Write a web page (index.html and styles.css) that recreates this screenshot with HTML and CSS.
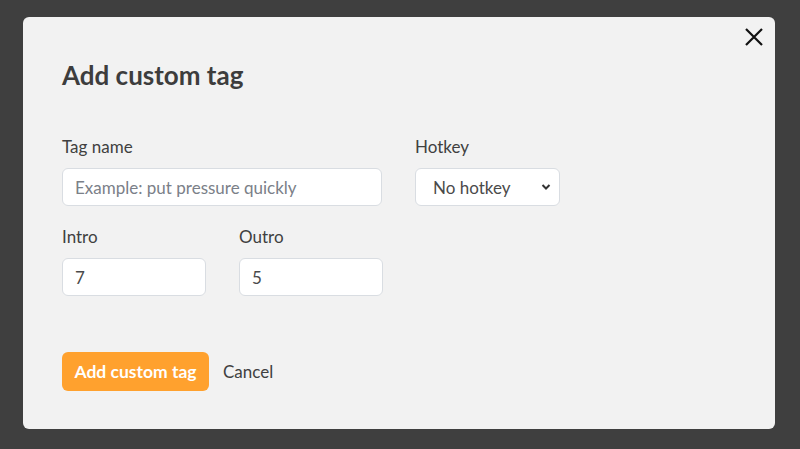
FILE: index.html
```html
<!DOCTYPE html>
<html>
<head>
<meta charset="utf-8">
<link rel="stylesheet" href="styles.css">
</head>
<body>
<div class="overlay">
  <div class="modal">
    <button class="close" aria-label="Close">
      <svg width="20" height="20" viewBox="0 0 20 20"><path d="M2 2 L18 18 M18 2 L2 18" stroke="#111" stroke-width="2.2" fill="none"/></svg>
    </button>
    <h2 class="title">Add custom tag</h2>
    <div class="row row-top">
      <div class="field field-name">
        <label class="label">Tag name</label>
        <input class="input" type="text" placeholder="Example: put pressure quickly">
      </div>
      <div class="field field-hotkey">
        <label class="label">Hotkey</label>
        <div class="select">
          <span>No hotkey</span>
          <svg width="10" height="8" viewBox="0 0 10 8"><path d="M1.5 2 L5 5.5 L8.5 2" stroke="#333" stroke-width="2" fill="none"/></svg>
        </div>
      </div>
    </div>
    <div class="row row-times">
      <div class="field field-small">
        <label class="label">Intro</label>
        <input class="input" type="text" value="7">
      </div>
      <div class="field field-small">
        <label class="label">Outro</label>
        <input class="input" type="text" value="5">
      </div>
    </div>
    <div class="actions">
      <button class="btn-primary">Add custom tag</button>
      <button class="btn-link">Cancel</button>
    </div>
  </div>
</div>
</body>
</html>
```
FILE: styles.css
```css
html, body {
  margin: 0;
  padding: 0;
  background: #3f3f3f;
  font-family: Lato, "Noto Sans", sans-serif;
}
.overlay {
  width: 800px;
  height: 449px;
  padding: 17px 25px 0 23px;
  box-sizing: border-box;
}
.modal {
  position: relative;
  background: #f2f2f2;
  border-radius: 6px;
  height: 412px;
  box-sizing: border-box;
  padding: 40px 39px 0 39px;
}
.close {
  position: absolute;
  top: 10px;
  right: 11px;
  width: 20px;
  height: 20px;
  padding: 0;
  border: 0;
  background: none;
  display: flex;
}
.title {
  margin: 0;
  font-size: 26px;
  font-weight: 700;
  color: #3d3d3d;
  line-height: 36px;
}
.row {
  display: flex;
  gap: 33px;
}
.row-top {
  margin-top: 44px;
}
.row-times {
  margin-top: 21px;
}
.field {
  display: flex;
  flex-direction: column;
}
.field-name { width: 320px; }
.field-hotkey { width: 145px; }
.field-small { width: 144px; }
.label {
  font-size: 17px;
  color: #404040;
  line-height: 20px;
  margin-bottom: 11px;
}
.input {
  height: 38px;
  box-sizing: border-box;
  border: 1px solid #d9dde2;
  border-radius: 6px;
  background: #fff;
  padding: 0 12px;
  font-family: Lato, "Noto Sans", sans-serif;
  font-size: 17px;
  color: #4a4a4a;
  outline: none;
}
.input::placeholder {
  color: #7b8088;
}
.select {
  height: 38px;
  box-sizing: border-box;
  border: 1px solid #d9dde2;
  border-radius: 6px;
  background: #fff;
  padding: 0 8px 0 17px;
  font-size: 17px;
  color: #4a4a4a;
  display: flex;
  align-items: center;
  justify-content: space-between;
}
.actions {
  display: flex;
  align-items: center;
  gap: 14px;
  margin-top: 56px;
}
.btn-primary {
  height: 39px;
  width: 147px;
  border: 0;
  border-radius: 6px;
  background: #ffa12e;
  color: #fff;
  font-family: Lato, "Noto Sans", sans-serif;
  font-weight: 700;
  font-size: 17.5px;
  padding: 0;
}
.btn-link {
  border: 0;
  background: none;
  padding: 0;
  font-family: Lato, "Noto Sans", sans-serif;
  font-size: 17px;
  color: #404040;
}
```
